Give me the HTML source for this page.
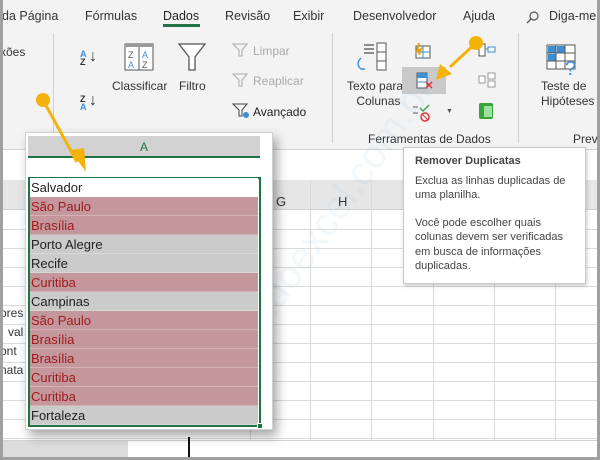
<!DOCTYPE html>
<html><head><meta charset="utf-8"><style>
*{margin:0;padding:0;box-sizing:border-box}
body{width:600px;height:460px;overflow:hidden;background:#fff;font-family:"Liberation Sans","DejaVu Sans",sans-serif;position:relative}
.a{position:absolute}
.t{font-size:12px;color:#333;white-space:nowrap}
</style></head><body>
<div class="a" style="left:0;top:0;width:600px;height:460px;border:3px solid #a0a0a0;border-top:none;z-index:50;pointer-events:none"></div>
<div class="a" style="left:0;top:0;width:600px;height:150px;background:#f3f3f3;border-bottom:1px solid #d4d4d4"></div>
<div class="a t" style="left:2px;top:9px;font-size:12.5px">da Página</div>
<div class="a t" style="left:85px;top:9px;font-size:12.5px">Fórmulas</div>
<div class="a t" style="left:163px;top:9px;font-size:12.5px;color:#222">Dados</div>
<div class="a" style="left:163px;top:24px;width:37px;height:3px;background:#217346"></div>
<div class="a t" style="left:225px;top:9px;font-size:12.5px">Revisão</div>
<div class="a t" style="left:293px;top:9px;font-size:12.5px">Exibir</div>
<div class="a t" style="left:353px;top:9px;font-size:12.5px">Desenvolvedor</div>
<div class="a t" style="left:463px;top:9px;font-size:12.5px">Ajuda</div>
<svg class="a" style="left:526px;top:10px" width="14" height="14"><circle cx="8" cy="6" r="4" fill="none" stroke="#555" stroke-width="1.2"/><line x1="5" y1="9" x2="1" y2="13" stroke="#555" stroke-width="1.3"/></svg>
<div class="a t" style="left:549px;top:9px;font-size:12.5px">Diga-me</div>
<div class="a t" style="left:0;top:45px;font-size:12px">xões</div>
<div class="a" style="left:53px;top:33px;width:1px;height:100px;background:#d0d0d0"></div>
<div class="a" style="left:332px;top:33px;width:1px;height:110px;background:#d0d0d0"></div>
<div class="a" style="left:518px;top:33px;width:1px;height:110px;background:#d0d0d0"></div>
<div class="a" style="left:80px;top:50px;font-size:9px;line-height:8px;font-weight:bold"><span style="color:#3b8ed8">A</span><br><span style="color:#333">Z</span></div>
<div class="a" style="left:89px;top:48px;font-size:16px;color:#333">↓</div>
<div class="a" style="left:80px;top:95px;font-size:9px;line-height:8px;font-weight:bold"><span style="color:#333">Z</span><br><span style="color:#3b8ed8">A</span></div>
<div class="a" style="left:89px;top:92px;font-size:16px;color:#333">↓</div>
<svg class="a" style="left:124px;top:43px" width="30" height="28"><rect x="1" y="1" width="28" height="26" fill="#fff" stroke="#555"/><rect x="1" y="1" width="28" height="3" fill="#999"/><line x1="15" y1="4" x2="15" y2="27" stroke="#555"/><text x="4" y="15" font-size="9" fill="#555" font-family="Liberation Sans">Z</text><text x="4" y="25" font-size="9" fill="#3b8ed8" font-family="Liberation Sans">A</text><text x="18" y="15" font-size="9" fill="#3b8ed8" font-family="Liberation Sans">A</text><text x="18" y="25" font-size="9" fill="#555" font-family="Liberation Sans">Z</text></svg>
<div class="a t" style="left:112px;top:79px">Classificar</div>
<svg class="a" style="left:178px;top:43px" width="28" height="28"><path d="M1 1 H27 L17 14 V27 H11 V14 Z" fill="#fff" stroke="#555" stroke-width="1.3"/></svg>
<div class="a t" style="left:179px;top:79px">Filtro</div>
<svg class="a" style="left:232px;top:43px" width="16" height="14"><path d="M1 1H15L10 7V13H7V7Z" fill="none" stroke="#aaa"/></svg>
<div class="a t" style="left:253px;top:44px;color:#aaa">Limpar</div>
<svg class="a" style="left:232px;top:73px" width="16" height="14"><path d="M1 1H15L10 7V13H7V7Z" fill="none" stroke="#aaa"/></svg>
<div class="a t" style="left:253px;top:74px;color:#aaa">Reaplicar</div>
<svg class="a" style="left:232px;top:103px" width="18" height="16"><path d="M1 1H15L10 7V13H7V7Z" fill="none" stroke="#444"/><circle cx="14" cy="12" r="3" fill="#3b8ed8"/></svg>
<div class="a t" style="left:253px;top:105px;color:#222">Avançado</div>
<svg class="a" style="left:355px;top:42px" width="34" height="30"><g stroke="#555" stroke-width="1.3"><line x1="9" y1="3" x2="19" y2="3"/><line x1="9" y1="7" x2="19" y2="7"/><line x1="9" y1="11" x2="19" y2="11"/></g><rect x="22" y="1" width="9" height="27" fill="#fff" stroke="#555"/><line x1="22" y1="10" x2="31" y2="10" stroke="#555"/><line x1="22" y1="19" x2="31" y2="19" stroke="#555"/><path d="M6 16 Q0 22 6 27 L10 27" fill="none" stroke="#3b8ed8" stroke-width="1.4"/></svg>
<div class="a t" style="left:347px;top:79px;text-align:center;line-height:15px">Texto para<br>&nbsp;&nbsp;Colunas</div>
<svg class="a" style="left:415px;top:43px" width="16" height="16"><rect x="1" y="3" width="14" height="12" fill="#fff" stroke="#555"/><line x1="1" y1="9" x2="15" y2="9" stroke="#3b8ed8"/><line x1="8" y1="3" x2="8" y2="15" stroke="#3b8ed8"/><path d="M4 0 L2 8 L6 6 L4 12" stroke="#e8a200" stroke-width="2" fill="none"/></svg>
<div class="a" style="left:402px;top:67px;width:44px;height:27px;background:#c9c9c9"></div>
<svg class="a" style="left:416px;top:72px" width="20" height="18"><rect x="1" y="1" width="10" height="15" fill="#fff" stroke="#555"/><rect x="1" y="1" width="10" height="5" fill="#3b8ed8"/><line x1="1" y1="10" x2="11" y2="10" stroke="#3b8ed8"/><path d="M10 10 L16 16 M16 10 L10 16" stroke="#d9383a" stroke-width="1.5"/></svg>
<svg class="a" style="left:412px;top:104px" width="20" height="18"><line x1="1" y1="3" x2="6" y2="3" stroke="#555"/><line x1="1" y1="9" x2="6" y2="9" stroke="#555"/><path d="M8 4 L11 7 L17 1" stroke="#2ea44f" fill="none" stroke-width="1.4"/><circle cx="13" cy="13" r="4" fill="none" stroke="#d9383a" stroke-width="1.5"/><line x1="10" y1="10" x2="16" y2="16" stroke="#d9383a"/></svg>
<div class="a" style="left:446px;top:108px;font-size:7px;color:#555">▼</div>
<svg class="a" style="left:478px;top:43px" width="18" height="14"><rect x="1" y="1" width="6" height="12" fill="#fff" stroke="#555"/><rect x="10" y="4" width="7" height="5" fill="#fff" stroke="#3b8ed8"/><line x1="7" y1="6" x2="10" y2="6" stroke="#3b8ed8"/></svg>
<svg class="a" style="left:478px;top:72px" width="18" height="16"><rect x="1" y="4" width="6" height="7" fill="#fff" stroke="#999"/><rect x="10" y="1" width="7" height="6" fill="#fff" stroke="#999"/><rect x="10" y="9" width="7" height="6" fill="#fff" stroke="#999"/></svg>
<svg class="a" style="left:478px;top:102px" width="16" height="18"><rect x="1" y="1" width="14" height="16" rx="2" fill="#3ba33b"/><rect x="6" y="4" width="8" height="11" fill="#9fe09f"/></svg>
<div class="a t" style="left:368px;top:132px">Ferramentas de Dados</div>
<svg class="a" style="left:545px;top:43px" width="34" height="34"><rect x="2" y="2" width="28" height="24" fill="#fff" stroke="#555"/><rect x="3" y="3" width="8" height="7" fill="#3b8ed8"/><rect x="3" y="11" width="8" height="7" fill="#3b8ed8"/><rect x="12" y="3" width="8" height="7" fill="#3b8ed8"/><line x1="2" y1="10" x2="30" y2="10" stroke="#555"/><line x1="2" y1="18" x2="30" y2="18" stroke="#555"/><line x1="11" y1="2" x2="11" y2="26" stroke="#555"/><line x1="20" y1="2" x2="20" y2="26" stroke="#555"/><text x="20" y="32" font-size="20" fill="#3b8ed8" font-family="Liberation Sans">?</text></svg>
<div class="a t" style="left:541px;top:79px;line-height:15px">Teste de<br>Hipóteses ▾</div>
<div class="a t" style="left:573px;top:132px">Previ</div>
<div class="a" style="left:0;top:150px;width:600px;height:30px;background:#fff"></div>
<div class="a" style="left:0;top:180px;width:600px;height:30px;background:#e6e6e6;border-bottom:1px solid #d0d0d0"></div>
<div class="a t" style="left:276px;top:194px;font-size:13px">G</div>
<div class="a t" style="left:338px;top:194px;font-size:13px">H</div>
<div class="a" style="left:0;top:211px;width:600px;height:230px;background:repeating-linear-gradient(#fff 0 18px,#dadada 18px 19px)"></div>
<div class="a" style="left:0;top:180px;width:600px;height:260px;background:repeating-linear-gradient(90deg,transparent 0 250px,#dadada 250px 251px,transparent 251px 310px,#dadada 310px 311px,transparent 311px 371px,#dadada 371px 372px,transparent 372px 433px,#dadada 433px 434px,transparent 434px 494px,#dadada 494px 495px,transparent 495px 555px,#dadada 555px 556px,transparent 556px 600px)"></div>
<div class="a" style="left:0;top:440px;width:600px;height:20px;background:#fff;border-top:1px solid #d4d4d4"></div>
<div class="a" style="left:3px;top:441px;width:125px;height:16px;background:#dcdcdc"></div>
<div class="a" style="left:188px;top:437px;width:2px;height:20px;background:#111"></div>
<div class="a t" style="left:0;top:306px">ores</div>
<div class="a t" style="left:8px;top:325px">val</div>
<div class="a t" style="left:0;top:344px">ont</div>
<div class="a t" style="left:0;top:363px">nata</div>
<div class="a" style="left:232px;top:318px;font-size:40px;color:rgba(120,180,220,0.09);transform:rotate(-55deg);transform-origin:left top;white-space:nowrap">tudoexcel.com.br</div>
<div class="a" style="left:25px;top:132px;width:248px;height:298px;background:#fff;border:1px solid #d0d0d0;box-shadow:4px 6px 10px rgba(0,0,0,0.35)"></div>
<div class="a" style="left:28px;top:136px;width:232px;height:22px;background:#d2d2d2;border-bottom:2px solid #217346;text-align:center;font-size:12px;color:#217346;line-height:22px">A</div>
<div class="a" style="left:28px;top:177px;width:233px;height:250px;border:2px solid #217346"></div>
<div id="rows" class="a" style="left:30px;top:178px;width:228px">
<style>#rows div{height:19px;font-size:13px;line-height:19px;padding-left:1px;border-bottom:1px solid rgba(255,255,255,0.25)}.d{background:#c4979c;color:#9c1a1c}.g{background:#cbcbcb;color:#222}</style>
<div style="background:#fff;color:#222">Salvador</div>
<div class="d">São Paulo</div><div class="d">Brasília</div>
<div class="g">Porto Alegre</div><div class="g">Recife</div>
<div class="d">Curitiba</div><div class="g">Campinas</div>
<div class="d">São Paulo</div><div class="d">Brasília</div><div class="d">Brasília</div><div class="d">Curitiba</div><div class="d">Curitiba</div>
<div class="g">Fortaleza</div>
</div>
<div class="a" style="left:257px;top:423px;width:6px;height:6px;background:#217346;border:1px solid #fff"></div>
<div class="a" style="left:403px;top:147px;width:183px;height:137px;background:#fff;border:1px solid #c8c8c8;box-shadow:1px 2px 4px rgba(0,0,0,0.2);padding:6px 0 0 11px;font-size:11px;color:#444;line-height:14.5px">
<div style="font-weight:bold;margin-bottom:5px">Remover Duplicatas</div>
<div>Exclua as linhas duplicadas de<br>uma planilha.</div>
<div style="margin-top:13px">Você pode escolher quais<br>colunas devem ser verificadas<br>em busca de informações<br>duplicadas.</div></div>
<svg class="a" style="left:0;top:0;z-index:40" width="600" height="460"><g stroke="#f5b20a" stroke-width="3" fill="#f5b20a"><circle cx="43" cy="100" r="7" stroke="none"/><line x1="43" y1="100" x2="77" y2="162"/><path d="M70 150 L86 172 L84 148Z" stroke="none"/><circle cx="476" cy="43" r="7" stroke="none"/><line x1="476" y1="43" x2="450" y2="67"/><path d="M440 64 L436 80 L452 74Z" stroke="none"/></g></svg>
</body></html>
